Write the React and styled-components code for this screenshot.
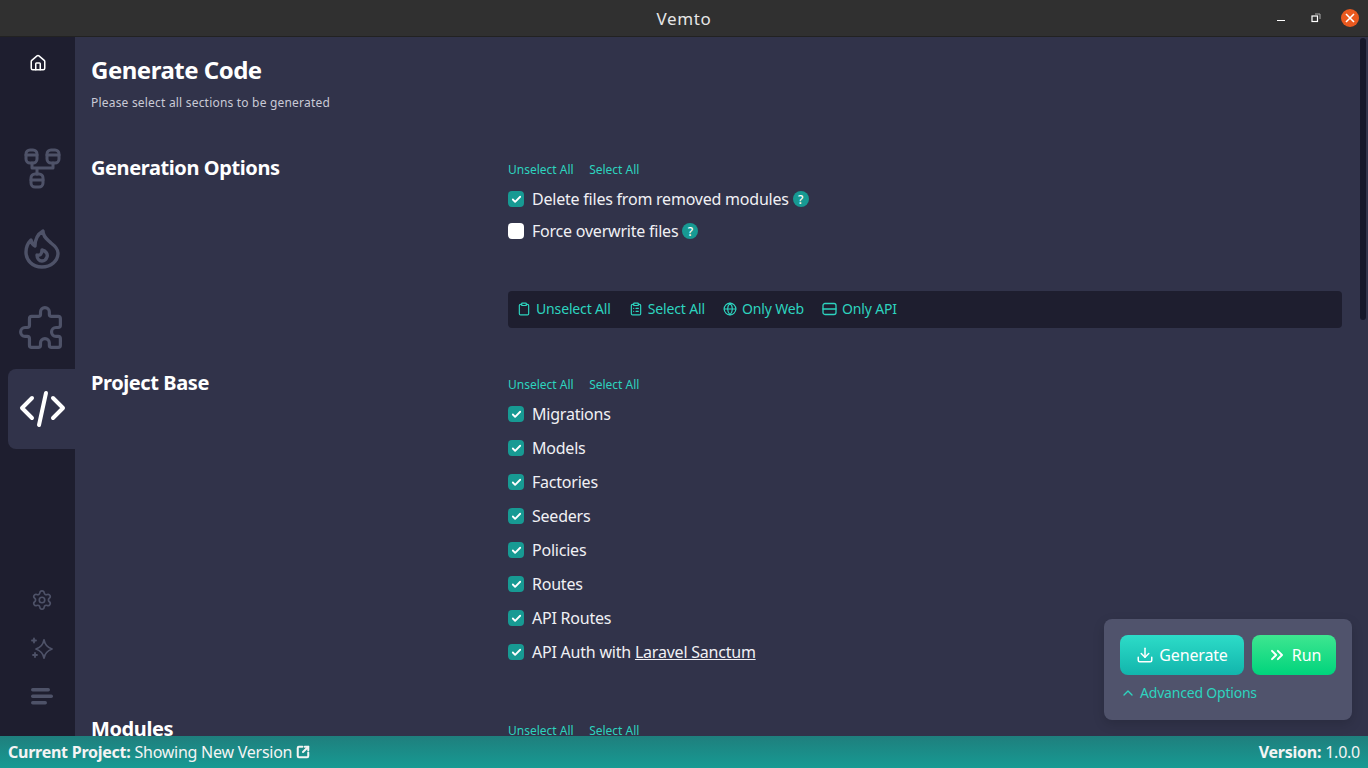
import styled, { createGlobalStyle } from "styled-components";
import { House, Settings, Clipboard, ClipboardList, Globe, Download, ChevronsRight, ChevronUp, Check, SquareArrowOutUpRight } from "lucide-react";

const Global = createGlobalStyle`
  html, body { margin: 0; padding: 0; height: 100%; overflow: hidden; }
  body { font-family: "Noto Sans", "Open Sans", sans-serif; background: #31334a; }
`;

const Window = styled.div`
  width: 1368px;
  height: 768px;
  display: flex;
  flex-direction: column;
  position: relative;
  overflow: hidden;
`;

const TitleBar = styled.div`
  height: 37px;
  flex: none;
  box-sizing: border-box;
  background: #303030;
  border-bottom: 1px solid #222;
  color: #e6e6e6;
  font-size: 17px;
  letter-spacing: 0.6px;
  display: flex;
  align-items: center;
  justify-content: center;
  position: relative;
`;

const WinControls = styled.div`
  position: absolute;
  right: 9px;
  top: 9px;
  display: flex;
  align-items: center;
  gap: 20px;
`;

const Body = styled.div`
  flex: 1;
  display: flex;
  min-height: 0;
`;

const Sidebar = styled.div`
  width: 75px;
  flex: none;
  background: #1e1e2f;
  display: flex;
  flex-direction: column;
  align-items: flex-end;
`;

const HomeSlot = styled.div`
  width: 75px;
  height: 52px;
  box-sizing: border-box;
  padding: 17px 0 0 1px;
  display: flex;
  justify-content: center;
  color: #fff;
`;

const NavItem = styled.div`
  width: 67px;
  height: 80px;
  flex: none;
  display: flex;
  align-items: center;
  justify-content: center;
  color: ${(p) => (p.$active ? "#fff" : "#4e5268")};
  background: ${(p) => (p.$active ? "#31334a" : "transparent")};
  border-radius: 8px 0 0 8px;
`;

const NavList = styled.div`
  margin-top: 40px;
  display: flex;
  flex-direction: column;
`;

const BottomNav = styled.div`
  margin-top: auto;
  margin-bottom: 28px;
  width: 67px;
  display: flex;
  flex-direction: column;
  align-items: center;
  gap: 24px;
  color: #4e5268;
`;

const BottomSlot = styled.div`
  height: 24px;
  display: flex;
  align-items: center;
`;

const Main = styled.div`
  flex: 1;
  box-sizing: border-box;
  padding: 17px 26px 0 16px;
  background: #31334a;
  overflow: hidden;
  position: relative;
  color: #fff;
`;

const Title = styled.h1`
  margin: 0;
  font-size: 24px;
  line-height: 32px;
  font-weight: 700;
  letter-spacing: -0.5px;
`;

const Subtitle = styled.p`
  margin: 9px 0 0;
  font-size: 12px;
  line-height: 16px;
  letter-spacing: 0.2px;
  color: #c9cad6;
`;

const Section = styled.div`
  display: grid;
  grid-template-columns: 417px 1fr;
  margin-top: ${(p) => p.$top}px;
`;

const Heading = styled.h2`
  margin: 0;
  font-size: 20px;
  line-height: 28px;
  font-weight: 700;
  letter-spacing: -0.4px;
`;

const SelectLinks = styled.div`
  display: flex;
  gap: 15.5px;
  font-size: 12px;
  line-height: 16px;
  color: #2dd4bf;
  margin-top: 8px;
`;

const Options = styled.div`
  display: flex;
  flex-direction: column;
  gap: ${(p) => p.$gap}px;
  margin-top: 9px;
`;

const Option = styled.label`
  display: flex;
  align-items: center;
  height: 24px;
  font-size: 16px;
  letter-spacing: -0.22px;
  color: #f0f0f4;
`;

const Box = styled.span`
  width: 16px;
  height: 16px;
  border-radius: 4px;
  flex: none;
  margin-right: 8px;
  display: flex;
  align-items: center;
  justify-content: center;
  background: ${(p) => (p.$on ? "#179a93" : "#fff")};
  color: #fff;
`;

const Help = styled.span`
  width: 16px;
  height: 16px;
  border-radius: 50%;
  background: #179a93;
  color: #fff;
  font-size: 12px;
  font-weight: 500;
  letter-spacing: 0;
  margin-left: 4px;
  display: flex;
  align-items: center;
  justify-content: center;
`;

const Under = styled.span`
  text-decoration: underline;
  margin-left: 4px;
`;

const Toolbar = styled.div`
  height: 37px;
  box-sizing: border-box;
  padding: 0 0 2px 9px;
  margin-top: 48px;
  background: #1e1e2f;
  border-radius: 4px;
  display: flex;
  align-items: center;
  gap: 18px;
  color: #2dd4bf;
  font-size: 14px;
  letter-spacing: -0.15px;
`;

const ToolItem = styled.span`
  display: flex;
  align-items: center;
  gap: 5px;
`;

const Panel = styled.div`
  position: absolute;
  right: 16px;
  bottom: 48px;
  width: 248px;
  height: 101px;
  box-sizing: border-box;
  padding: 16px;
  background: #50536c;
  border-radius: 8px;
  box-shadow: 0 4px 12px rgba(0, 0, 0, 0.15);
  z-index: 3;
`;

const PanelButtons = styled.div`
  display: flex;
  gap: 8px;
`;

const ActionButton = styled.div`
  height: 40px;
  width: ${(p) => p.$width}px;
  border-radius: 8px;
  background: ${(p) => p.$bg};
  color: #fff;
  font-size: 16px;
  letter-spacing: -0.15px;
  display: flex;
  align-items: center;
  justify-content: center;
  gap: 5px;
`;

const Advanced = styled.div`
  display: flex;
  align-items: center;
  gap: 4px;
  margin: 8px 0 0 0;
  color: #2dd4bf;
  font-size: 14px;
  line-height: 20px;
  letter-spacing: -0.2px;
`;

const Scrollbar = styled.div`
  position: absolute;
  right: 2px;
  top: 38px;
  width: 6px;
  height: 282px;
  background: #16182a;
  border-radius: 3px;
  z-index: 2;
`;

const Footer = styled.div`
  height: 32px;
  flex: none;
  box-sizing: border-box;
  background: linear-gradient(#1f7f7d, #179a93);
  color: #f4f4f4;
  font-size: 16px;
  letter-spacing: -0.25px;
  display: flex;
  align-items: center;
  justify-content: space-between;
  padding: 0 8px 1px;
  position: relative;
  z-index: 4;
`;

const FooterPart = styled.div`
  display: flex;
  align-items: center;
  gap: 4px;
`;

const Strong = styled.b`
  font-weight: 700;
`;

const PuzzleSvg = styled.svg`
  margin: -4px 3px 0 0;
  transform: scaleX(-1);
`;

const SchemaIcon = () => (
  <svg width="38" height="42" viewBox="0 0 38 42" fill="none" stroke="currentColor" strokeWidth="3" strokeLinejoin="round" strokeLinecap="round">
    <rect x="3" y="2" width="11" height="13" rx="4" />
    <rect x="24" y="2" width="12" height="13" rx="4" />
    <rect x="8" y="26" width="12" height="13" rx="4" />
    <path d="M3 7h11M24 7h12M8 32h12M14 20h16v-5M14 20v6M9 15v5h5" />
  </svg>
);

const FlameIcon = () => (
  <svg width="36" height="40" viewBox="0 0 36 40" fill="none" stroke="currentColor" strokeWidth="3.4" strokeLinejoin="round" strokeLinecap="round">
    <path d="M18 38C8 38 2 31 2 23c0-5 2-9 5-12 .5 3 2 5 4 6C11 10 14 5 19 2c0 6 4 8 8 12 4 3 7 6 7 10 0 8-7 14-16 14z" />
    <path d="M13 26c3 1 5-1 5-5 4 1 6 4 5 7-1 3-3 4-5 4-3 0-5-3-5-6z" />
  </svg>
);

const PuzzleIcon = () => (
  <PuzzleSvg width="53" height="53" viewBox="0 0 24 24" fill="none" stroke="currentColor" strokeWidth="1.45" strokeLinejoin="round" strokeLinecap="round">
    <path d="M4 7h3a1 1 0 0 0 1-1v-1a2 2 0 0 1 4 0v1a1 1 0 0 0 1 1h3a1 1 0 0 1 1 1v3a1 1 0 0 0 1 1h1a2 2 0 0 1 0 4h-1a1 1 0 0 0-1 1v3a1 1 0 0 1-1 1h-3a1 1 0 0 1-1-1v-1a2 2 0 0 0-4 0v1a1 1 0 0 1-1 1h-3a1 1 0 0 1-1-1v-3a1 1 0 0 1 1-1h1a2 2 0 0 0 0-4h-1a1 1 0 0 1-1-1v-3a1 1 0 0 1 1-1" />
  </PuzzleSvg>
);

const CodeIcon = () => (
  <svg width="48" height="40" viewBox="0 0 48 40" fill="none" stroke="currentColor" strokeWidth="4" strokeLinejoin="round" strokeLinecap="round">
    <path d="M14 9L4 19l10 10M35 9l10 10-10 10M28 4l-7 32" />
  </svg>
);

const SparkIcon = () => (
  <svg width="22" height="22" viewBox="0 0 22 22" fill="none" stroke="currentColor" strokeWidth="1.8" strokeLinejoin="round" strokeLinecap="round">
    <path d="M13 3c1 5 3 7 8 9-5 2-7 4-8 9-1-5-3-7-8-9 5-2 7-4 8-9z" />
    <path d="M3 1.5v4M1 3.5h4M4 16v4M2 18h4" />
  </svg>
);

const LinesIcon = () => (
  <svg width="22" height="17" viewBox="0 0 22 17" fill="currentColor">
    <rect x="0" y="0" width="19" height="3.4" rx="1.7" />
    <rect x="0" y="6.5" width="22" height="3.4" rx="1.7" />
    <rect x="0" y="13" width="16" height="3.4" rx="1.7" />
  </svg>
);

const ServerIcon = () => (
  <svg width="15" height="14" viewBox="0 0 15 14" fill="none" stroke="currentColor" strokeWidth="1.3" strokeLinecap="round">
    <rect x="1" y="1.5" width="13" height="11" rx="2" />
    <path d="M1 7h13" />
  </svg>
);

const RestoreIcon = () => (
  <svg width="10" height="10" viewBox="0 0 10 10" fill="none" stroke="#fff">
    <rect x="1" y="3" width="5.5" height="5.5" strokeWidth="1.2" />
    <path d="M4 1h5v5" stroke="#aaa" strokeWidth="1" />
  </svg>
);

const CloseButton = styled.span`
  width: 18px;
  height: 18px;
  border-radius: 50%;
  background: #e9591f;
  display: flex;
  align-items: center;
  justify-content: center;
`;

const Minimize = styled.span`
  width: 8px;
  height: 1px;
  background: #fff;
  margin: 4px 6px 0 0;
`;

const Checkbox = ({ on = true }) => (
  <Box $on={on}>{on && <Check size={11} strokeWidth={4} />}</Box>
);

const Links = () => (
  <SelectLinks>
    <span>Unselect All</span>
    <span>Select All</span>
  </SelectLinks>
);

const baseItems = ["Migrations", "Models", "Factories", "Seeders", "Policies", "Routes", "API Routes"];

export default function App() {
  return (
    <Window>
      <Global />
      <TitleBar>
        Vemto
        <WinControls>
          <Minimize />
          <RestoreIcon />
          <CloseButton>
            <svg width="10" height="10" viewBox="0 0 10 10" stroke="#fff" strokeWidth="1.6">
              <path d="M1 1l8 8M9 1l-8 8" />
            </svg>
          </CloseButton>
        </WinControls>
      </TitleBar>
      <Body>
        <Sidebar>
          <HomeSlot>
            <House size={18} strokeWidth={2} />
          </HomeSlot>
          <NavList>
            <NavItem><SchemaIcon /></NavItem>
            <NavItem><FlameIcon /></NavItem>
            <NavItem><PuzzleIcon /></NavItem>
            <NavItem $active><CodeIcon /></NavItem>
          </NavList>
          <BottomNav>
            <BottomSlot><Settings size={22} strokeWidth={1.8} /></BottomSlot>
            <BottomSlot><SparkIcon /></BottomSlot>
            <BottomSlot><LinesIcon /></BottomSlot>
          </BottomNav>
        </Sidebar>
        <Main>
          <Title>Generate Code</Title>
          <Subtitle>Please select all sections to be generated</Subtitle>

          <Section $top={43}>
            <Heading>Generation Options</Heading>
            <div>
              <Links />
              <Options $gap={8}>
                <Option><Checkbox />Delete files from removed modules<Help>?</Help></Option>
                <Option><Checkbox on={false} />Force overwrite files<Help>?</Help></Option>
              </Options>
              <Toolbar>
                <ToolItem><Clipboard size={14} />Unselect All</ToolItem>
                <ToolItem><ClipboardList size={14} />Select All</ToolItem>
                <ToolItem><Globe size={14} />Only Web</ToolItem>
                <ToolItem><ServerIcon />Only API</ToolItem>
              </Toolbar>
            </div>
          </Section>

          <Section $top={41}>
            <Heading>Project Base</Heading>
            <div>
              <Links />
              <Options $gap={10}>
                {baseItems.map((item) => (
                  <Option key={item}><Checkbox />{item}</Option>
                ))}
                <Option><Checkbox />API Auth with<Under>Laravel Sanctum</Under></Option>
              </Options>
            </div>
          </Section>

          <Section $top={51}>
            <Heading>Modules</Heading>
            <Links />
          </Section>
        </Main>
      </Body>
      <Footer>
        <FooterPart>
          <Strong>Current Project:</Strong> Showing New Version
          <SquareArrowOutUpRight size={14} strokeWidth={3.5} />
        </FooterPart>
        <FooterPart>
          <Strong>Version:</Strong> 1.0.0
        </FooterPart>
      </Footer>
      <Scrollbar />
      <Panel>
        <PanelButtons>
          <ActionButton $width={124} $bg="linear-gradient(#2ddcc8, #12b5ac)"><Download size={18} />Generate</ActionButton>
          <ActionButton $width={84} $bg="linear-gradient(#3ee690, #00d47c)"><ChevronsRight size={20} strokeWidth={2.4} />Run</ActionButton>
        </PanelButtons>
        <Advanced><ChevronUp size={16} />Advanced Options</Advanced>
      </Panel>
    </Window>
  );
}
